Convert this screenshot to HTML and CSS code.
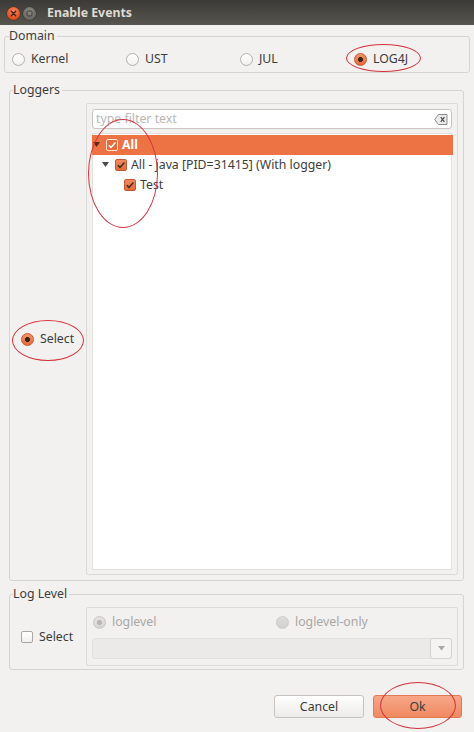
FILE: index.html
```html
<!DOCTYPE html>
<html>
<head>
<meta charset="utf-8">
<title>Enable Events</title>
<link rel="stylesheet" href="styles.css">
</head>
<body>
<div class="window">
  <div class="titlebar">
    <span class="wbtn close">
      <svg width="13" height="13" viewBox="0 0 13 13"><path d="M4.3 4.3 L8.7 8.7 M8.7 4.3 L4.3 8.7" stroke="#3b2218" stroke-width="1.3" stroke-linecap="round"/></svg>
    </span>
    <span class="wbtn min">
      <svg width="13" height="13" viewBox="0 0 13 13"><rect x="4" y="4" width="5" height="5" rx="1" fill="none" stroke="#3e3d39" stroke-width="1"/></svg>
    </span>
    <span class="title">Enable Events</span>
  </div>

  <fieldset class="group domain">
    <legend>Domain</legend>
    <div class="domain-row">
      <label class="opt"><span class="radio"></span>Kernel</label>
      <label class="opt"><span class="radio"></span>UST</label>
      <label class="opt"><span class="radio"></span>JUL</label>
      <label class="opt"><span class="radio on"></span>LOG4J</label>
    </div>
  </fieldset>

  <fieldset class="group loggers">
    <legend>Loggers</legend>
    <div class="split split-loggers">
      <div class="side">
        <label class="opt"><span class="radio on"></span>Select</label>
      </div>
      <div class="composite comp-loggers">
        <div class="filter">
          <span class="ph">type filter text</span>
          <svg class="clear" width="14" height="11" viewBox="0 0 14 11"><path d="M4.5 0.5 H13 V10.5 H4.5 L0.7 5.5 Z" fill="#ebebeb" stroke="#8d8d8d" stroke-width="1"/><path d="M6.8 3.2 L10.4 7.8 M10.4 3.2 L6.8 7.8" stroke="#4a4a4a" stroke-width="1.2"/></svg>
        </div>
        <div class="tree">
          <div class="row sel" style="padding-left:0px">
            <span class="exp"><svg width="10" height="8" viewBox="0 0 10 8"><path d="M0 1 H7 L3.5 6 Z" fill="#5b2a18"/></svg></span>
            <span class="cb cb-sel"><svg width="12" height="12" viewBox="0 0 12 12"><path d="M2.8 6.2 L5 8.4 L9.4 3.4" fill="none" stroke="#fff" stroke-width="1.5"/></svg></span>
            <span class="txt strong">All</span>
          </div>
          <div class="row" style="padding-left:9px">
            <span class="exp"><svg width="10" height="8" viewBox="0 0 10 8"><path d="M0 1 H7 L3.5 6 Z" fill="#4a4a4a"/></svg></span>
            <span class="cb"><svg width="12" height="12" viewBox="0 0 12 12"><path d="M2.8 6.2 L5 8.4 L9.4 3.4" fill="none" stroke="#3d2a1e" stroke-width="1.5"/></svg></span>
            <span class="txt">All - java [PID=31415] (With logger)</span>
          </div>
          <div class="row" style="padding-left:18px">
            <span class="exp"></span>
            <span class="cb"><svg width="12" height="12" viewBox="0 0 12 12"><path d="M2.8 6.2 L5 8.4 L9.4 3.4" fill="none" stroke="#3d2a1e" stroke-width="1.5"/></svg></span>
            <span class="txt">Test</span>
          </div>
        </div>
      </div>
    </div>
  </fieldset>

  <fieldset class="group loglevel">
    <legend>Log Level</legend>
    <div class="split split-level">
      <div class="side">
        <label class="opt"><span class="check"></span>Select</label>
      </div>
      <div class="composite comp-level">
        <div class="lvl-row">
          <label class="opt dis"><span class="radio dis-on"></span>loglevel</label>
          <label class="opt dis"><span class="radio dis-off"></span>loglevel-only</label>
        </div>
        <div class="combo">
          <span class="combo-btn"><svg width="7" height="5" viewBox="0 0 7 5"><path d="M0 0 H7 L3.5 4.5 Z" fill="#aaa8a5"/></svg></span>
        </div>
      </div>
    </div>
  </fieldset>

  <div class="buttons">
    <span class="btn cancel">Cancel</span>
    <span class="btn ok">Ok</span>
  </div>

  <span class="mark m1"></span>
  <span class="mark m2"></span>
  <span class="mark m3"></span>
  <span class="mark m4"></span>
</div>
</body>
</html>
```

FILE: styles.css
```css
* { box-sizing: border-box; }
html, body { margin: 0; padding: 0; }
body {
  font-family: "Noto Sans", "DejaVu Sans", sans-serif;
  font-size: 12.3px;
  line-height: 16px;
  color: #3c3c3c;
  background: #f2f1f0;
}
.window {
  position: relative;
  width: 474px;
  height: 732px;
  background: #f2f1f0;
  display: flex;
  flex-direction: column;
  overflow: hidden;
}

/* title bar */
.titlebar {
  flex: none;
  height: 25px;
  display: flex;
  align-items: center;
  padding-left: 7px;
  padding-top: 1px;
  background: linear-gradient(#3b3a36, #57554f);
}
.wbtn {
  width: 13px;
  height: 13px;
  border-radius: 50%;
  display: flex;
  align-items: center;
  justify-content: center;
}
.close {
  background: radial-gradient(circle at 50% 35%, #f98a5e, #e0481a 75%);
  box-shadow: 0 0 0 0.5px #4a2a1c;
}
.min {
  margin-left: 3px;
  background: radial-gradient(circle at 50% 35%, #8e8c86, #68665f 75%);
  box-shadow: 0 0 0 0.5px #2f2e2a;
}
.title {
  margin-left: 11px;
  color: #dfdbd2;
  font-weight: bold;
}

/* group frames */
.group {
  margin: 0;
  padding: 0;
  min-width: 0;
  border: 1px solid #d6d4d0;
  border-radius: 3px;
  flex: none;
}
.group > legend {
  padding: 0 2px 0 0;
  line-height: 16px;
}
.domain { margin: 3px 4px 0 4px; }
.domain > legend { margin-left: 4px; }
.loggers { margin: 9px 10px 0 9px; }
.loggers > legend { margin-left: 3px; }
.loglevel { margin: 5px 10px 0 9px; }
.loglevel > legend { margin-left: 3px; }

.domain-row {
  display: grid;
  grid-template-columns: repeat(4, 114px);
  padding: 5px 0 3px 7px;
}
.opt {
  display: flex;
  align-items: center;
  gap: 6px;
  height: 20px;
  white-space: nowrap;
}

/* radios */
.radio {
  width: 13px;
  height: 13px;
  border-radius: 50%;
  border: 1px solid #b4b1ac;
  background: linear-gradient(#ffffff, #f1f0ee);
  flex: none;
}
.radio.on {
  border-color: #c9582e;
  background: radial-gradient(circle, #3a2418 0 2.2px, transparent 2.7px),
              linear-gradient(#f39268, #e46b3c);
}
.radio.dis-on {
  border-color: #c9c7c3;
  background: radial-gradient(circle, #b9b7b3 0 2.2px, transparent 2.7px),
              linear-gradient(#e4e3e0, #d6d4d1);
}
.radio.dis-off {
  border-color: #cfcdc9;
  background: linear-gradient(#dedcd9, #d2d0cc);
}

.check {
  width: 12px;
  height: 12px;
  border: 1px solid #aaa7a2;
  border-radius: 2px;
  background: linear-gradient(#ffffff, #f1f0ee);
  flex: none;
}

/* splits */
.split { display: flex; }
.split-loggers { padding: 5px 5px 5px 0; }
.split-level { padding: 5px 5px 3px 0; }
.side {
  width: 76px;
  flex: none;
  display: flex;
  align-items: center;
  padding-left: 11px;
}
.composite {
  flex: 1;
  border: 1px solid #dcdad6;
  border-radius: 2px;
}
.comp-loggers { padding: 5px 5px 4px 5px; }
.comp-level { padding: 4px 5px 6px 5px; }

/* filter */
.filter {
  height: 20px;
  display: flex;
  align-items: center;
  justify-content: space-between;
  padding: 0 3px 0 3px;
  background: #fff;
  border: 1px solid #c8c5c0;
  border-radius: 3px;
}
.ph { color: #b9b7b3; }
.clear { flex: none; }

/* tree */
.tree {
  margin-top: 4px;
  height: 437px;
  background: #fff;
  border: 1px solid #e2e0dc;
  padding-top: 1px;
}
.row {
  height: 20px;
  display: flex;
  align-items: center;
  white-space: nowrap;
}
.row.sel {
  background: #ee7344;
  color: #fff;
  margin: 0 -2px 0 -1px;
  padding-left: 1px !important;
}
.strong { font-weight: bold; }
.exp {
  width: 10px;
  height: 8px;
  margin-right: 3px;
  flex: none;
  display: flex;
}
.cb {
  width: 12px;
  height: 12px;
  flex: none;
  border-radius: 2px;
  border: 1px solid #c4582f;
  background: linear-gradient(#f08a5e, #e36a3b);
  display: flex;
  align-items: center;
  justify-content: center;
  margin-right: 4px;
}
.cb svg { flex: none; margin: -1px; }
.cb.cb-sel {
  border-color: #fbe3d8;
  background: #e96b3b;
}

/* log level */
.lvl-row {
  display: grid;
  grid-template-columns: 183px 1fr;
  padding-left: 1px;
}
.dis { color: #a9a7a3; }
.combo {
  margin-top: 6px;
  height: 21px;
  border: 1px solid #e3e1de;
  border-radius: 3px;
  background: #ebeae8;
  display: flex;
  justify-content: flex-end;
}
.combo-btn {
  width: 22px;
  margin: -1px -1px -1px 0;
  border: 1px solid #d4d2ce;
  border-radius: 3px;
  background: #f5f4f2;
  display: flex;
  align-items: center;
  justify-content: center;
}

/* buttons */
.buttons {
  display: flex;
  justify-content: flex-end;
  gap: 9px;
  padding: 25px 12px 0 0;
}
.btn {
  height: 23px;
  border-radius: 3px;
  display: flex;
  align-items: center;
  justify-content: center;
  color: #3c3c3c;
}
.cancel {
  width: 90px;
  border: 1px solid #c6c3be;
  background: linear-gradient(#ffffff, #ecebe8);
}
.ok {
  width: 89px;
  border: 1px solid #e07a52;
  background: linear-gradient(#f7a688, #f08a62);
}

/* red annotation ellipses */
.mark {
  position: absolute;
  border: 1.3px solid #d4323c;
  border-radius: 50%;
}
.m1 { left: 346px; top: 44px; width: 75px; height: 28px; }
.m2 { left: 88px; top: 119px; width: 70px; height: 109px; }
.m3 { left: 12px; top: 320px; width: 72px; height: 41px; }
.m4 { left: 380px; top: 682px; width: 76px; height: 47px; }
```
